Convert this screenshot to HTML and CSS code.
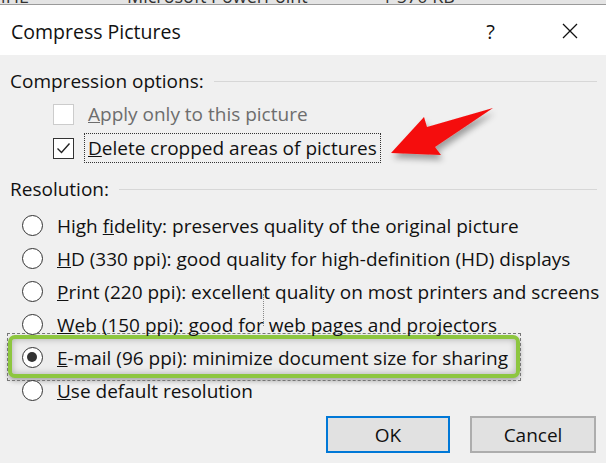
FILE: index.html
```html
<!DOCTYPE html>
<html lang="en">
  <head>
    <meta charset="UTF-8" />
    <meta name="viewport" content="width=device-width, initial-scale=1.0" />
    <title>Compress Pictures</title>
    <link rel="stylesheet" href="styles.css">
  </head>
  <body>
    <!-- strip of the window behind the dialog -->
    <div class="behind">
      <span class="behind-a">ИНЕ</span>
      <span class="behind-b">Microsoft PowerPoint</span>
      <span class="behind-c">1 570 KB</span>
    </div>

    <div class="titlebar">
      <span class="title">Compress Pictures</span>
      <span class="help">?</span>
      <svg class="close" width="16" height="16" viewBox="0 0 16 16">
        <path d="M1 1 L15 15 M15 1 L1 15" stroke="#111" stroke-width="1.3" fill="none" />
      </svg>
    </div>

    <div class="dialog">
      <div class="group-head">
        <span>Compression options:</span>
        <div class="rule"></div>
      </div>

      <div class="check-row disabled first">
        <span class="checkbox"></span>
        <span class="label"><u>A</u>pply only to this picture</span>
      </div>
      <div class="check-row">
        <span class="checkbox checked">
          <svg width="15" height="15" viewBox="0 0 15 15">
            <path d="M1.5 7.5 L5.5 11.5 L13.5 2.5" stroke="#222" stroke-width="1.4" fill="none" />
          </svg>
        </span>
        <span class="label focus"><u>D</u>elete cropped areas of pictures</span>
        <!-- red arrow annotation -->
        <svg class="arrow" width="120" height="70" viewBox="0 0 120 70">
          <defs>
            <filter id="shade" x="-20%" y="-20%" width="150%" height="160%">
              <feGaussianBlur in="SourceAlpha" stdDeviation="3" />
              <feOffset dx="2" dy="5" result="b" />
              <feComponentTransfer><feFuncA type="linear" slope="0.35" /></feComponentTransfer>
              <feMerge><feMergeNode /><feMergeNode in="SourceGraphic" /></feMerge>
            </filter>
          </defs>
          <polygon points="6,53 39,17 42,27 108,8 50,47 56,55" fill="#f50d0d" filter="url(#shade)" />
        </svg>
      </div>

      <div class="group-head second">
        <span>Resolution:</span>
        <div class="rule"></div>
      </div>

      <div class="radios">
        <div class="radio-row">
          <span class="radio"></span>
          <span class="label">High <u>f</u>idelity: preserves quality of the original picture</span>
        </div>
        <div class="radio-row">
          <span class="radio"></span>
          <span class="label"><u>H</u>D (330 ppi): good quality for high-definition (HD) displays</span>
        </div>
        <div class="radio-row">
          <span class="radio"></span>
          <span class="label"><u>P</u>rint (220 ppi): excellent quality on most printers and screens</span>
        </div>
        <div class="radio-row">
          <span class="radio"></span>
          <span class="label"><u>W</u>eb (150 ppi): good for web pages and projectors</span>
          <span class="stray-dots"></span>
        </div>
        <div class="radio-row picked">
          <span class="highlight"></span>
          <span class="focus-box"></span>
          <span class="radio on"></span>
          <span class="label"><u>E</u>-mail (96 ppi): minimize document size for sharing</span>
        </div>
        <div class="radio-row">
          <span class="radio"></span>
          <span class="label"><u>U</u>se default resolution</span>
        </div>
      </div>

      <div class="buttons">
        <button class="btn default">OK</button>
        <button class="btn">Cancel</button>
      </div>
    </div>
  </body>
</html>
```

FILE: styles.css
```css
body {
  font-family: "Open Sans", "Noto Sans", sans-serif;
  background-color: #f0f0f0;
  margin: 0;
  width: 606px;
  height: 463px;
  overflow: hidden;
  color: #111;
}

/* window behind */
.behind {
  height: 4px;
  background: #e4e4e4;
  border-bottom: 1px solid #9a9a9a;
  overflow: hidden;
  display: flex;
  font-size: 18px;
  line-height: 18px;
  color: #333;
  white-space: nowrap;
}

.behind span {
  margin-top: -13px;
}

.behind-a {
  margin-left: -8px;
}

.behind-b {
  margin-left: 98px;
}

.behind-c {
  margin-left: 74px;
}

.titlebar {
  height: 50px;
  background: #fff;
  display: flex;
  align-items: center;
  padding-left: 11px;
  padding-right: 28px;
}

.title {
  font-size: 19.5px;
  flex: 1;
  margin-top: 2px;
}

.help {
  font-size: 20px;
  margin-right: 67px;
  margin-top: 2px;
}

.close {
  margin-top: 2px;
}

.dialog {
  font-size: 19px;
}

.group-head {
  display: flex;
  align-items: center;
  height: 20px;
  margin-top: 16px;
  padding-left: 10px;
  padding-right: 9px;
}

.group-head.second {
  margin-top: 14px;
}

.rule {
  flex: 1;
  border-top: 1px solid #d7d7d7;
  margin-left: 10px;
  margin-top: 1px;
}

.check-row {
  display: flex;
  align-items: center;
  height: 34px;
  padding-left: 53px;
  position: relative;
}

.check-row.first {
  margin-top: 6px;
}

.checkbox {
  width: 21px;
  height: 21px;
  box-sizing: border-box;
  border: 1px solid #333;
  background: #fff;
  display: flex;
  align-items: center;
  justify-content: center;
  margin-right: 14px;
}

.disabled .checkbox {
  border-color: #cccccc;
}

.disabled .label {
  color: #6d6d6d;
}

.label.focus {
  outline: 1px dotted #333;
  outline-offset: 3px;
  line-height: 22px;
}

.arrow {
  position: absolute;
  left: 385px;
  top: -31px;
}

.radios {
  margin-top: 10px;
}

.radio-row {
  display: flex;
  align-items: center;
  height: 33px;
  padding-left: 22px;
  position: relative;
}

.radio {
  width: 21px;
  height: 21px;
  box-sizing: border-box;
  border: 1.5px solid #333;
  border-radius: 50%;
  background: #fff;
  margin-right: 14px;
  position: relative;
  z-index: 2;
}

.radio.on::after {
  content: "";
  position: absolute;
  left: 4px;
  top: 4px;
  width: 10px;
  height: 10px;
  border-radius: 50%;
  background: #333;
}

.radio-row .label {
  position: relative;
  z-index: 2;
  white-space: nowrap;
}

/* green annotation box round the chosen option */
.highlight {
  position: absolute;
  left: 8px;
  top: -6px;
  width: 512px;
  height: 43px;
  box-sizing: border-box;
  border: 4px solid #8dc63f;
  border-radius: 7px;
  background: #ededed;
  box-shadow: inset 0 0 7px rgba(0, 0, 0, 0.28), 0 3px 5px rgba(0, 0, 0, 0.3);
  z-index: 1;
}

.focus-box {
  position: absolute;
  left: 7px;
  top: -8px;
  width: 514px;
  height: 48px;
  box-sizing: border-box;
  border: 1px dashed #777;
  z-index: 1;
}

.stray-dots {
  position: absolute;
  left: 263px;
  top: -14px;
  height: 32px;
  border-left: 1px dotted #888;
}

.buttons {
  display: flex;
  justify-content: flex-end;
  gap: 20px;
  margin-top: 9px;
  padding-right: 10px;
}

.btn {
  width: 126px;
  height: 37px;
  box-sizing: border-box;
  background: #e1e1e1;
  border: 2px solid #adadad;
  font-family: inherit;
  font-size: 19px;
  color: #111;
  padding: 0;
}

.btn.default {
  width: 124px;
  border-color: #0078d7;
}
```
